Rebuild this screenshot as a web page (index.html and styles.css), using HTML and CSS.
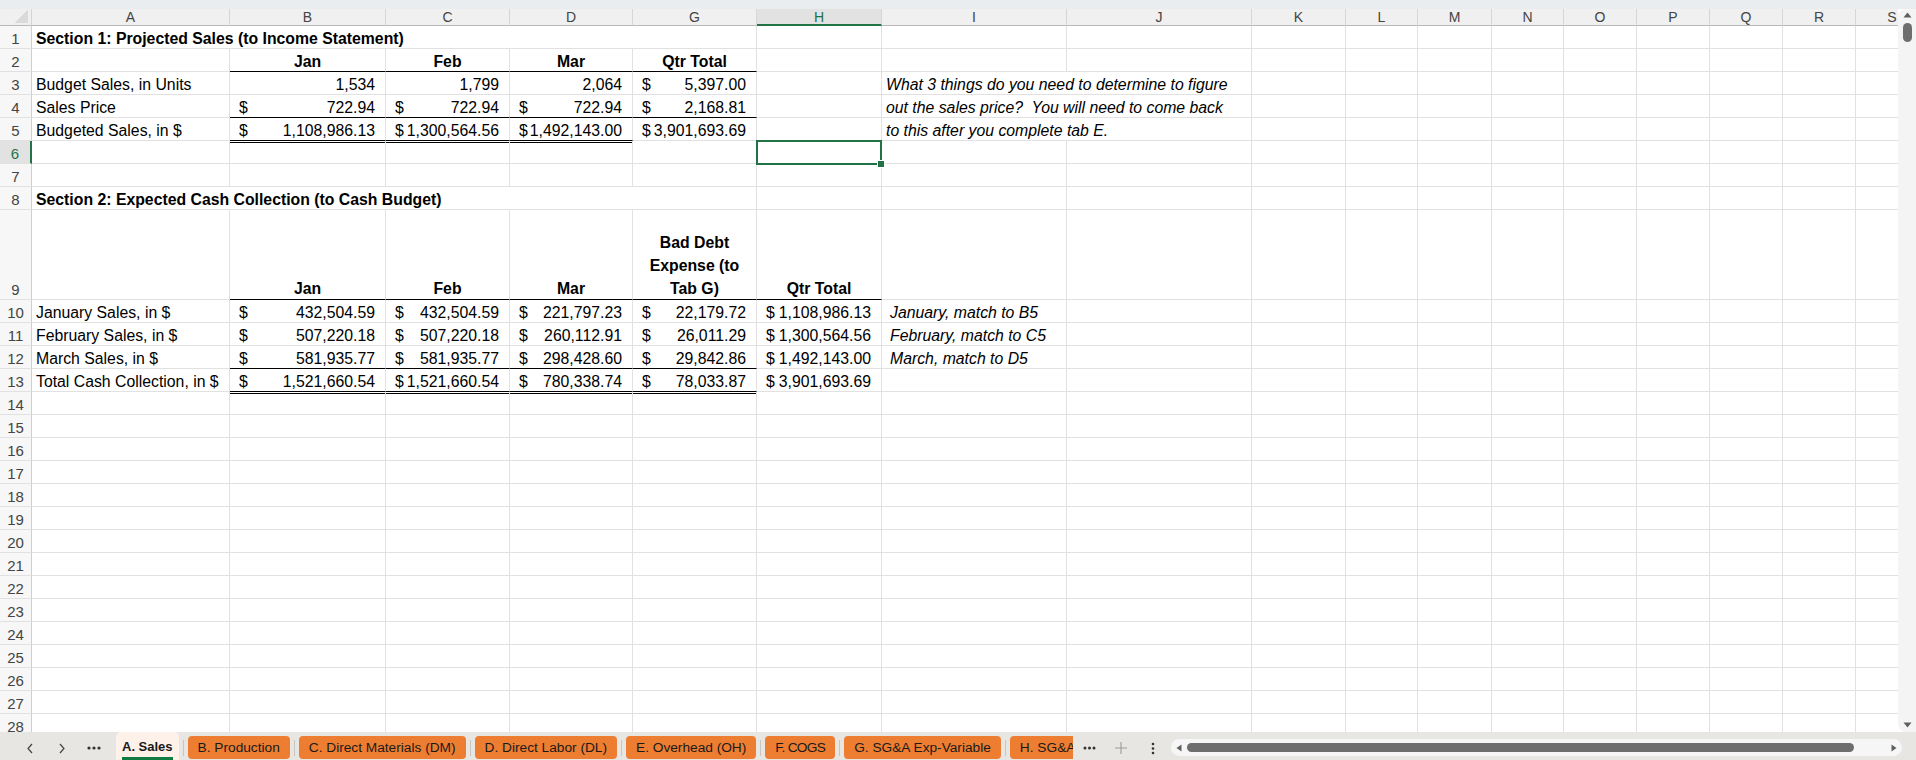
FILE: index.html
```html
<!DOCTYPE html>
<html>
<head>
<meta charset="utf-8">
<title>A. Sales</title>
<link rel="stylesheet" href="styles.css">
</head>
<body>
<div class="app">
  <div class="topband"></div>
  <div class="main">
    <div class="viewport">
      <div class="grid">
        <div class="corner"></div><div class="ch">A</div><div class="ch">B</div><div class="ch">C</div><div class="ch">D</div><div class="ch">G</div><div class="ch on">H</div><div class="ch">I</div><div class="ch">J</div><div class="ch">K</div><div class="ch">L</div><div class="ch">M</div><div class="ch">N</div><div class="ch">O</div><div class="ch">P</div><div class="ch">Q</div><div class="ch">R</div><div class="ch">S</div>

        <div class="rh">1</div><div class="tx bold span5">Section 1: Projected Sales (to Income Statement)</div><div></div><div></div><div></div><div></div><div></div><div></div><div></div><div></div><div></div><div></div><div></div><div></div>

        <div class="rh">2</div><div></div><div class="hd bb">Jan</div><div class="hd bb">Feb</div><div class="hd bb">Mar</div><div class="hd bb">Qtr Total</div><div></div><div></div><div></div><div></div><div></div><div></div><div></div><div></div><div></div><div></div><div></div><div></div>

        <div class="rh">3</div><div class="tx">Budget Sales, in Units</div><div class="num">1,534</div><div class="num">1,799</div><div class="num">2,064</div><div class="acc"><span>$</span><span>5,397.00</span></div><div></div><div class="note span2">What 3 things do you need to determine to figure</div><div></div><div></div><div></div><div></div><div></div><div></div><div></div><div></div><div></div>

        <div class="rh">4</div><div class="tx">Sales Price</div><div class="acc bb"><span>$</span><span>722.94</span></div><div class="acc bb"><span>$</span><span>722.94</span></div><div class="acc bb"><span>$</span><span>722.94</span></div><div class="acc bb"><span>$</span><span>2,168.81</span></div><div></div><div class="note span2">out the sales price?  You will need to come back</div><div></div><div></div><div></div><div></div><div></div><div></div><div></div><div></div><div></div>

        <div class="rh">5</div><div class="tx">Budgeted Sales, in $</div><div class="acc dbl"><span>$</span><span>1,108,986.13</span></div><div class="acc dbl"><span>$</span><span>1,300,564.56</span></div><div class="acc dbl"><span>$</span><span>1,492,143.00</span></div><div class="acc"><span>$</span><span>3,901,693.69</span></div><div></div><div class="note span2">to this after you complete tab E.</div><div></div><div></div><div></div><div></div><div></div><div></div><div></div><div></div><div></div>

        <div class="rh on">6</div><div></div><div></div><div></div><div></div><div></div><div class="sel"></div><div></div><div></div><div></div><div></div><div></div><div></div><div></div><div></div><div></div><div></div><div></div>

        <div class="rh">7</div><div></div><div></div><div></div><div></div><div></div><div></div><div></div><div></div><div></div><div></div><div></div><div></div><div></div><div></div><div></div><div></div><div></div>

        <div class="rh">8</div><div class="tx bold span5">Section 2: Expected Cash Collection (to Cash Budget)</div><div></div><div></div><div></div><div></div><div></div><div></div><div></div><div></div><div></div><div></div><div></div><div></div>

        <div class="rh">9</div><div></div><div class="hd bb tall">Jan</div><div class="hd bb tall">Feb</div><div class="hd bb tall">Mar</div><div class="hd bb tall"><span class="wrap">Bad Debt<br>Expense (to<br>Tab G)</span></div><div class="hd bb tall">Qtr Total</div><div></div><div></div><div></div><div></div><div></div><div></div><div></div><div></div><div></div><div></div><div></div>

        <div class="rh">10</div><div class="tx">January Sales, in $</div><div class="acc"><span>$</span><span>432,504.59</span></div><div class="acc"><span>$</span><span>432,504.59</span></div><div class="acc"><span>$</span><span>221,797.23</span></div><div class="acc"><span>$</span><span>22,179.72</span></div><div class="acc"><span>$</span><span>1,108,986.13</span></div><div class="note ind">January, match to B5</div><div></div><div></div><div></div><div></div><div></div><div></div><div></div><div></div><div></div><div></div>

        <div class="rh">11</div><div class="tx">February Sales, in $</div><div class="acc"><span>$</span><span>507,220.18</span></div><div class="acc"><span>$</span><span>507,220.18</span></div><div class="acc"><span>$</span><span>260,112.91</span></div><div class="acc"><span>$</span><span>26,011.29</span></div><div class="acc"><span>$</span><span>1,300,564.56</span></div><div class="note ind">February, match to C5</div><div></div><div></div><div></div><div></div><div></div><div></div><div></div><div></div><div></div><div></div>

        <div class="rh">12</div><div class="tx">March Sales, in $</div><div class="acc bb"><span>$</span><span>581,935.77</span></div><div class="acc bb"><span>$</span><span>581,935.77</span></div><div class="acc bb"><span>$</span><span>298,428.60</span></div><div class="acc bb"><span>$</span><span>29,842.86</span></div><div class="acc"><span>$</span><span>1,492,143.00</span></div><div class="note ind">March, match to D5</div><div></div><div></div><div></div><div></div><div></div><div></div><div></div><div></div><div></div><div></div>

        <div class="rh">13</div><div class="tx">Total Cash Collection, in $</div><div class="acc dbl"><span>$</span><span>1,521,660.54</span></div><div class="acc dbl"><span>$</span><span>1,521,660.54</span></div><div class="acc dbl"><span>$</span><span>780,338.74</span></div><div class="acc dbl"><span>$</span><span>78,033.87</span></div><div class="acc"><span>$</span><span>3,901,693.69</span></div><div></div><div></div><div></div><div></div><div></div><div></div><div></div><div></div><div></div><div></div><div></div>

        <div class="rh">14</div><div></div><div></div><div></div><div></div><div></div><div></div><div></div><div></div><div></div><div></div><div></div><div></div><div></div><div></div><div></div><div></div><div></div>
        <div class="rh">15</div><div></div><div></div><div></div><div></div><div></div><div></div><div></div><div></div><div></div><div></div><div></div><div></div><div></div><div></div><div></div><div></div><div></div>
        <div class="rh">16</div><div></div><div></div><div></div><div></div><div></div><div></div><div></div><div></div><div></div><div></div><div></div><div></div><div></div><div></div><div></div><div></div><div></div>
        <div class="rh">17</div><div></div><div></div><div></div><div></div><div></div><div></div><div></div><div></div><div></div><div></div><div></div><div></div><div></div><div></div><div></div><div></div><div></div>
        <div class="rh">18</div><div></div><div></div><div></div><div></div><div></div><div></div><div></div><div></div><div></div><div></div><div></div><div></div><div></div><div></div><div></div><div></div><div></div>
        <div class="rh">19</div><div></div><div></div><div></div><div></div><div></div><div></div><div></div><div></div><div></div><div></div><div></div><div></div><div></div><div></div><div></div><div></div><div></div>
        <div class="rh">20</div><div></div><div></div><div></div><div></div><div></div><div></div><div></div><div></div><div></div><div></div><div></div><div></div><div></div><div></div><div></div><div></div><div></div>
        <div class="rh">21</div><div></div><div></div><div></div><div></div><div></div><div></div><div></div><div></div><div></div><div></div><div></div><div></div><div></div><div></div><div></div><div></div><div></div>
        <div class="rh">22</div><div></div><div></div><div></div><div></div><div></div><div></div><div></div><div></div><div></div><div></div><div></div><div></div><div></div><div></div><div></div><div></div><div></div>
        <div class="rh">23</div><div></div><div></div><div></div><div></div><div></div><div></div><div></div><div></div><div></div><div></div><div></div><div></div><div></div><div></div><div></div><div></div><div></div>
        <div class="rh">24</div><div></div><div></div><div></div><div></div><div></div><div></div><div></div><div></div><div></div><div></div><div></div><div></div><div></div><div></div><div></div><div></div><div></div>
        <div class="rh">25</div><div></div><div></div><div></div><div></div><div></div><div></div><div></div><div></div><div></div><div></div><div></div><div></div><div></div><div></div><div></div><div></div><div></div>
        <div class="rh">26</div><div></div><div></div><div></div><div></div><div></div><div></div><div></div><div></div><div></div><div></div><div></div><div></div><div></div><div></div><div></div><div></div><div></div>
        <div class="rh">27</div><div></div><div></div><div></div><div></div><div></div><div></div><div></div><div></div><div></div><div></div><div></div><div></div><div></div><div></div><div></div><div></div><div></div>
        <div class="rh">28</div><div></div><div></div><div></div><div></div><div></div><div></div><div></div><div></div><div></div><div></div><div></div><div></div><div></div><div></div><div></div><div></div><div></div>
      </div>
    </div>
    <div class="vscroll">
      <svg class="arrow" width="9" height="6" viewBox="0 0 9 6"><path d="M4.5 0.5 L8.5 5.5 L0.5 5.5 Z" fill="#5f5f5f"/></svg>
      <div class="vthumb"></div>
      <div class="vspace"></div>
      <svg class="arrow" width="9" height="6" viewBox="0 0 9 6"><path d="M0.5 0.5 L8.5 0.5 L4.5 5.5 Z" fill="#5f5f5f"/></svg>
    </div>
  </div>
  <div class="tabbar">
    <div class="nav">
      <span class="btn"><svg width="8" height="11" viewBox="0 0 8 11"><path d="M6 1 L2 5.5 L6 10" fill="none" stroke="#444" stroke-width="1.2"/></svg></span>
      <span class="btn"><svg width="8" height="11" viewBox="0 0 8 11"><path d="M2 1 L6 5.5 L2 10" fill="none" stroke="#444" stroke-width="1.2"/></svg></span>
      <span class="btn"><svg width="14" height="4" viewBox="0 0 14 4"><circle cx="2" cy="2" r="1.6" fill="#333"/><circle cx="7" cy="2" r="1.6" fill="#333"/><circle cx="12" cy="2" r="1.6" fill="#333"/></svg></span>
    </div>
    <div class="tabs">
      <div class="tab active"><span class="lbl">A. Sales</span></div>
      <span class="sep"></span>
      <div class="tab">B. Production</div>
      <span class="sep"></span>
      <div class="tab">C. Direct Materials (DM)</div>
      <span class="sep"></span>
      <div class="tab">D. Direct Labor (DL)</div>
      <span class="sep"></span>
      <div class="tab">E. Overhead (OH)</div>
      <span class="sep"></span>
      <div class="tab caps">F. COGS</div>
      <span class="sep"></span>
      <div class="tab">G. SG&amp;A Exp-Variable</div>
      <span class="sep"></span>
      <div class="tab">H. SG&amp;A Exp-Fixed</div>
    </div>
    <div class="tools">
      <span class="btn"><svg width="13" height="4" viewBox="0 0 13 4"><circle cx="2" cy="2" r="1.5" fill="#333"/><circle cx="6.5" cy="2" r="1.5" fill="#333"/><circle cx="11" cy="2" r="1.5" fill="#333"/></svg></span>
      <span class="btn"><svg width="14" height="14" viewBox="0 0 14 14"><path d="M7 1 V13 M1 7 H13" stroke="#9a9a9a" stroke-width="1.1" fill="none"/></svg></span>
      <span class="btn"><svg width="4" height="13" viewBox="0 0 4 13"><circle cx="2" cy="2" r="1.3" fill="#333"/><circle cx="2" cy="6.5" r="1.3" fill="#333"/><circle cx="2" cy="11" r="1.3" fill="#333"/></svg></span>
    </div>
    <div class="hscroll">
      <svg width="6" height="8" viewBox="0 0 6 8"><path d="M5.5 0.5 L0.5 4 L5.5 7.5 Z" fill="#5f5f5f"/></svg>
      <div class="hthumb"></div>
      <svg width="6" height="8" viewBox="0 0 6 8"><path d="M0.5 0.5 L5.5 4 L0.5 7.5 Z" fill="#5f5f5f"/></svg>
    </div>
  </div>
</div>
</body>
</html>
```

FILE: styles.css
```css
* { box-sizing: border-box; }
html, body { margin: 0; padding: 0; }
body {
  width: 1916px;
  height: 760px;
  overflow: hidden;
  background: #ffffff;
  font-family: "Liberation Sans", Arial, sans-serif;
  color: #000;
}
.app { display: flex; flex-direction: column; width: 1916px; height: 760px; }
.topband { flex: none; height: 9px; background: #e9edf0; }
.main { flex: none; display: flex; height: 723px; }
.viewport { flex: none; width: 1898px; height: 723px; overflow: hidden; background: #fff; }

.grid {
  display: grid;
  width: max-content;
  grid-template-columns: 32px 198px 156px 124px 123px 124px 125px 185px 185px 94px 72px 74px 72px 73px 73px 73px 73px 73px;
  grid-template-rows: 17px repeat(8, 23px) 90px repeat(19, 23px);
}
.grid > div {
  display: flex;
  align-items: flex-end;
  min-width: 0;
  border-right: 1px solid #e1e1e1;
  border-bottom: 1px solid #e1e1e1;
  font-size: 15.8px;
  line-height: 18px;
  white-space: nowrap;
}

.grid > .corner {
  position: relative;
  background: #f0f0f0;
  border-right: 1px solid #d4d4d4;
  border-bottom: 1px solid #b9b9b9;
}
.corner::after {
  content: "";
  position: absolute;
  right: 3px;
  bottom: 2px;
  width: 15px;
  height: 13px;
  background: linear-gradient(135deg, transparent 50%, #dadada 50%);
}
.grid > .ch {
  align-items: center;
  justify-content: center;
  background: #f0f0f0;
  border-right: 1px solid #d6d6d6;
  border-bottom: 1px solid #b9b9b9;
  font-size: 14px;
  line-height: 16px;
  color: #444;
}
.grid > .ch.on {
  background: #e2e2e2;
  color: #217346;
  border-bottom: 2px solid #217346;
}
.grid > .rh {
  justify-content: center;
  background: #f7f7f7;
  border-right: 1px solid #cfcfcf;
  border-bottom: 1px solid #e1e1e1;
  font-size: 15px;
  color: #444;
}
.grid > .rh.on {
  background: #e2e2e2;
  color: #217346;
  border-right: 2px solid #217346;
}

.span5 { grid-column: span 5; }
.span2 { grid-column: span 2; }
.grid > .tx { padding-left: 4px; }
.grid > .bold { font-weight: bold; }
.grid > .hd { justify-content: center; font-weight: bold; }
.grid > .tall { padding-bottom: 1px; }
.grid > .num { justify-content: flex-end; padding-right: 10px; }
.grid > .acc { justify-content: space-between; padding: 0 10px 0 9px; }
.grid > .note { padding-left: 4px; font-style: italic; white-space: pre; }
.grid > .note.ind { padding-left: 8px; }
.grid > .bb { border-bottom: 1px solid #000; }
.grid > .dbl {
  border-bottom: 1px solid #000;
  box-shadow: 0 1px 0 #fff, 0 2px 0 #000;
}
.wrap {
  display: block;
  text-align: center;
  line-height: 23.4px;
  margin-bottom: -2.9px;
  white-space: nowrap;
}

.grid > .sel { position: relative; }
.sel::after {
  content: "";
  position: absolute;
  left: -1px;
  top: -1px;
  right: -1px;
  bottom: -2px;
  border: 2px solid #217346;
}
.sel::before {
  content: "";
  position: absolute;
  right: -4px;
  bottom: -5px;
  width: 6px;
  height: 6px;
  background: #217346;
  border: 1px solid #fff;
  z-index: 2;
}

.vscroll {
  flex: none;
  width: 18px;
  height: 723px;
  background: #f4f4f4;
  border-radius: 8px 0 0 8px;
  display: flex;
  flex-direction: column;
  align-items: center;
  padding: 3px 0 4px 1px;
}
.vscroll .arrow { flex: none; }
.vthumb {
  flex: none;
  width: 9px;
  height: 19px;
  margin-top: 5px;
  border-radius: 5px;
  background: #6e6e6e;
}
.vspace { flex: 1; }

.tabbar {
  flex: none;
  height: 28px;
  display: flex;
  align-items: stretch;
  background: #e8e6e3;
  font-size: 13.7px;
}
.nav { flex: none; display: flex; width: 116px; padding-left: 14px; }
.btn {
  flex: none;
  width: 32px;
  display: flex;
  align-items: center;
  justify-content: center;
  padding-top: 4px;
}
.tabs {
  flex: none;
  width: 957px;
  display: flex;
  align-items: flex-start;
  overflow: hidden;
}
.tab {
  flex: none;
  height: 23px;
  margin-top: 4px;
  padding: 3px 10px 0;
  line-height: 18px;
  background: #ed7d31;
  color: #1a1a1a;
  border-radius: 4px;
  white-space: nowrap;
}
.tab.caps { letter-spacing: -0.7px; }
.tab.active {
  height: 28px;
  margin-top: 0;
  padding: 6px 6px 0;
  background: #fdf1e9;
  border-radius: 5px 5px 0 0;
  font-weight: bold;
  font-size: 13px;
}
.tab.active .lbl {
  display: inline-block;
  border-bottom: 3px solid #107c41;
  padding-bottom: 1px;
}
.sep {
  flex: none;
  width: 1px;
  height: 16px;
  margin: 8px 4px 0;
  background: #c9c6c2;
}
.tools { flex: none; display: flex; width: 98px; }
.hscroll {
  flex: none;
  width: 731px;
  height: 17px;
  margin-top: 7px;
  border-radius: 9px;
  background: #f6f6f6;
  display: flex;
  align-items: center;
  padding: 0 5px 0 5px;
  gap: 5px;
}
.hscroll svg { flex: none; }
.hthumb {
  flex: 1;
  height: 9.5px;
  margin-right: 32px;
  border-radius: 5px;
  background: #6e6e6e;
}
```
